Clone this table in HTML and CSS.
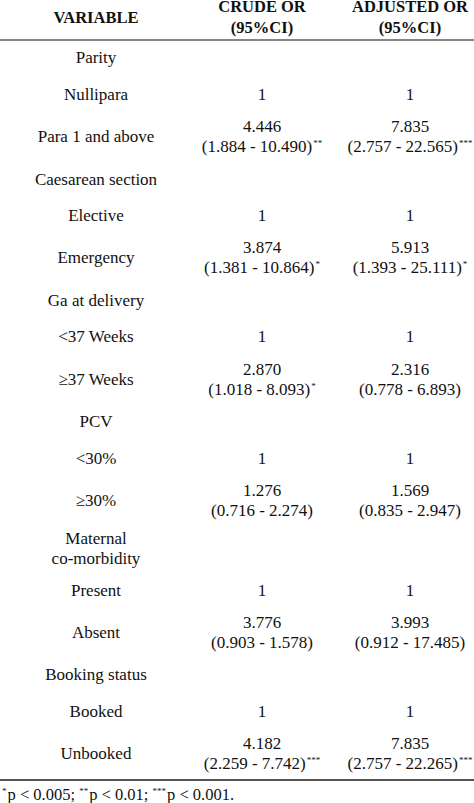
FILE: index.html
```html
<!DOCTYPE html>
<html lang="en">
<head>
<meta charset="utf-8">
<title>Odds ratios</title>
<link rel="stylesheet" href="styles.css">
</head>
<body>
<div class="page">
  <div class="table">
    <div class="row head">
      <div class="cell">VARIABLE</div>
      <div class="cell">CRUDE OR<br>(95%CI)</div>
      <div class="cell">ADJUSTED OR<br>(95%CI)</div>
    </div>

    <div class="row s"><div class="cell">Parity</div><div class="cell"></div><div class="cell"></div></div>
    <div class="row s"><div class="cell">Nullipara</div><div class="cell">1</div><div class="cell">1</div></div>
    <div class="row d"><div class="cell">Para 1 and above</div><div class="cell">4.446<br>(1.884 - 10.490)<span class="sup">**</span></div><div class="cell">7.835<br>(2.757 - 22.565)<span class="sup">***</span></div></div>

    <div class="row s"><div class="cell">Caesarean section</div><div class="cell"></div><div class="cell"></div></div>
    <div class="row s"><div class="cell">Elective</div><div class="cell">1</div><div class="cell">1</div></div>
    <div class="row d"><div class="cell">Emergency</div><div class="cell">3.874<br>(1.381 - 10.864)<span class="sup">*</span></div><div class="cell">5.913<br>(1.393 - 25.111)<span class="sup">*</span></div></div>

    <div class="row s"><div class="cell">Ga at delivery</div><div class="cell"></div><div class="cell"></div></div>
    <div class="row s"><div class="cell">&lt;37 Weeks</div><div class="cell">1</div><div class="cell">1</div></div>
    <div class="row d"><div class="cell">&ge;37 Weeks</div><div class="cell">2.870<br>(1.018 - 8.093)<span class="sup">*</span></div><div class="cell">2.316<br>(0.778 - 6.893)</div></div>

    <div class="row s"><div class="cell">PCV</div><div class="cell"></div><div class="cell"></div></div>
    <div class="row s"><div class="cell">&lt;30%</div><div class="cell">1</div><div class="cell">1</div></div>
    <div class="row d"><div class="cell">&ge;30%</div><div class="cell">1.276<br>(0.716 - 2.274)</div><div class="cell">1.569<br>(0.835 - 2.947)</div></div>

    <div class="row d"><div class="cell">Maternal<br>co-morbidity</div><div class="cell"></div><div class="cell"></div></div>
    <div class="row s"><div class="cell">Present</div><div class="cell">1</div><div class="cell">1</div></div>
    <div class="row d"><div class="cell">Absent</div><div class="cell">3.776<br>(0.903 - 1.578)</div><div class="cell">3.993<br>(0.912 - 17.485)</div></div>

    <div class="row s"><div class="cell">Booking status</div><div class="cell"></div><div class="cell"></div></div>
    <div class="row s"><div class="cell">Booked</div><div class="cell">1</div><div class="cell">1</div></div>
    <div class="row d last"><div class="cell">Unbooked</div><div class="cell">4.182<br>(2.259 - 7.742)<span class="sup">***</span></div><div class="cell">7.835<br>(2.757 - 22.265)<span class="sup">***</span></div></div>
  </div>
  <p class="note"><span class="sup">*</span>p &lt; 0.005; <span class="sup">**</span>p &lt; 0.01; <span class="sup">***</span>p &lt; 0.001.</p>
</div>
</body>
</html>
```
FILE: styles.css
```css
html, body {
  margin: 0;
  padding: 0;
  background: #ffffff;
}

body {
  width: 474px;
  height: 803px;
  overflow: hidden;
  font-family: "Liberation Serif", "Times New Roman", serif;
  color: #111111;
}

.page {
  width: 474px;
  overflow: hidden;
}

.table {
  width: 488px;
  display: flex;
  flex-direction: column;
}

.row {
  display: grid;
  grid-template-columns: 192px 140px 156px;
  align-items: center;
  font-size: 17px;
  line-height: 20px;
}

.cell {
  text-align: center;
  white-space: nowrap;
}

.head {
  margin-top: -4px;
  font-weight: bold;
  font-size: 16.5px;
  line-height: 21px;
  padding-bottom: 1px;
  border-bottom: 2px solid #858585;
}

.s {
  height: 36.7px;
  padding-bottom: 2px;
  box-sizing: border-box;
}

.d {
  height: 47.8px;
  padding-bottom: 2px;
  box-sizing: border-box;
}

.last {
  border-bottom: 2px solid #555555;
  height: 49.8px;
}

.sup {
  font-size: 9px;
  line-height: 0;
  vertical-align: 6px;
  margin-left: 1px;
}

.note {
  margin: 6px 0 0 0;
  padding-left: 2px;
  font-size: 16.5px;
  line-height: 16px;
  white-space: nowrap;
}

.note .sup {
  margin-left: 0;
  margin-right: 1px;
}
```
